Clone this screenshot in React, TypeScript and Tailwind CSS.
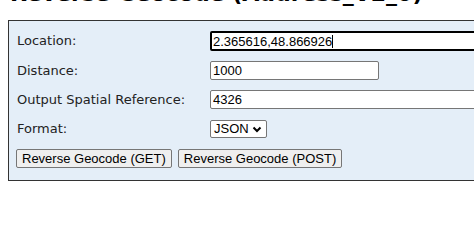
export default function App() {
  return (
    <div className="bg-white h-[245px] w-[474px] overflow-hidden font-['DejaVu_Sans',sans-serif] text-[13px] text-[#222]">
      {/* heading, scrolled mostly out of view: only its bottom strip shows */}
      <div className="h-[8px] overflow-hidden pl-[10px]">
        <h2 className="mt-[-19px] whitespace-nowrap font-['DejaVu_Sans',sans-serif] text-[22px] font-bold leading-[26px] text-black">
          Reverse Geocode (Address_V2_0)
        </h2>
      </div>
      <div className="ml-[8px] mt-[12px] w-[500px] border border-[#333] bg-[#e4eef8] pl-[8px] pt-[10px] pb-[12px]">
        <div className="flex h-[20px] items-center">
          <label className="w-[193px] shrink-0">Location:</label>
          <div className="relative">
            <input
              defaultValue="2.365616,48.866926"
              className="h-[20px] w-[300px] rounded-[2px] border-2 border-black bg-white px-[1px] font-['Liberation_Sans',sans-serif] text-[13px] text-black outline-none"
            />
            <span className="absolute left-[122px] top-[4px] h-[13px] w-px bg-black" />
          </div>
        </div>
        <div className="mt-[10px] flex h-[19px] items-center">
          <label className="w-[193px] shrink-0">Distance:</label>
          <input
            defaultValue="1000"
            className="h-[19px] w-[169px] rounded-[2px] border border-[#767676] bg-white px-[2px] font-['Liberation_Sans',sans-serif] text-[13px] text-black outline-none"
          />
        </div>
        <div className="mt-[10px] flex h-[19px] items-center">
          <label className="w-[193px] shrink-0">Output Spatial Reference:</label>
          <input
            defaultValue="4326"
            className="h-[19px] w-[300px] rounded-[2px] border border-[#767676] bg-white px-[2px] font-['Liberation_Sans',sans-serif] text-[13px] text-black outline-none"
          />
        </div>
        <div className="mt-[11px] flex h-[18px] items-center">
          <label className="w-[193px] shrink-0">Format:</label>
          <div className="flex h-[18px] w-[57px] items-center justify-between rounded-[2px] border border-[#767676] bg-white pl-[3px] pr-[4px] font-['Liberation_Sans',sans-serif] text-[13px] text-black">
            <span>JSON</span>
            <svg width="10" height="7" viewBox="0 0 10 7">
              <path d="M1.5 1.5 L5 5 L8.5 1.5" fill="none" stroke="black" strokeWidth="2" />
            </svg>
          </div>
        </div>
        <div className="mt-[11px] flex gap-[6px] ml-[-1px]">
          <button className="h-[19px] rounded-[2px] border border-[#767676] bg-[#efefef] px-[5px] font-['Liberation_Sans',sans-serif] text-[13px] leading-none text-black">
            Reverse Geocode (GET)
          </button>
          <button className="h-[19px] rounded-[2px] border border-[#767676] bg-[#efefef] px-[5px] font-['Liberation_Sans',sans-serif] text-[13px] leading-none text-black">
            Reverse Geocode (POST)
          </button>
        </div>
      </div>
    </div>
  );
}
